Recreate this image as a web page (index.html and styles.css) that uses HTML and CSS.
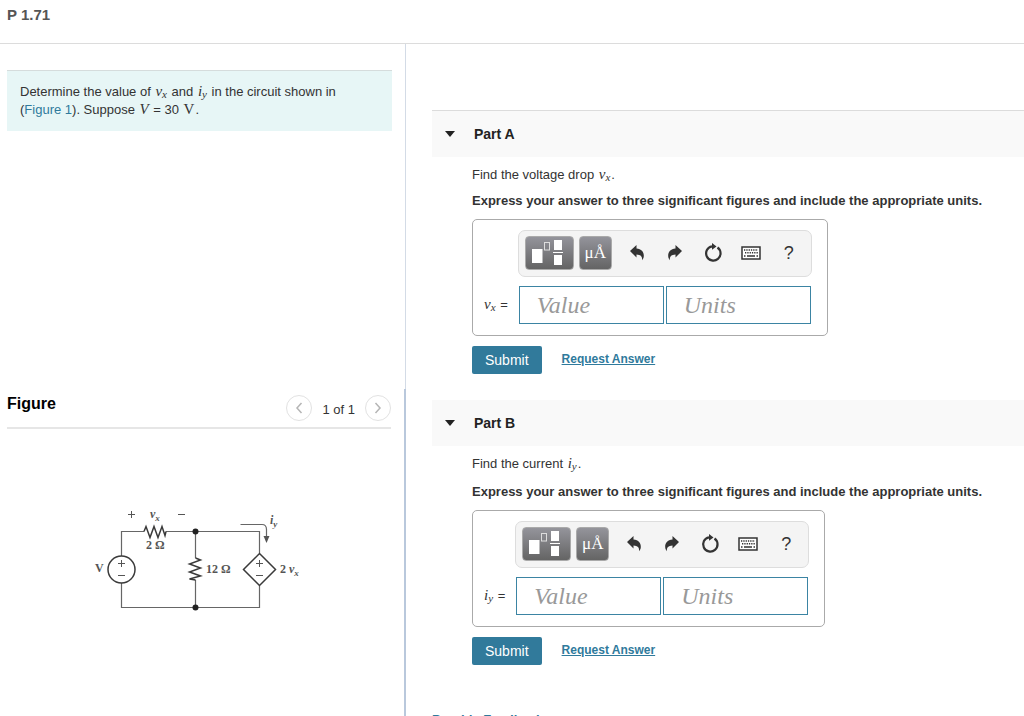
FILE: index.html
```html
<!DOCTYPE html>
<html lang="en">
<head>
    <meta charset="UTF-8">
    <meta name="viewport" content="width=device-width, initial-scale=1.0">
    <title>P 1.71</title>
    <link rel="stylesheet" href="styles.css">
</head>
<body>
    <!-- shared toolbar icons -->
    <svg class="icon-defs" width="0" height="0" aria-hidden="true">
        <symbol id="icon-template" viewBox="0 0 49 33">
            <rect x="7" y="12" width="10.500" height="14" fill="#fff"/>
            <rect x="19.500" y="5.500" width="5" height="7.500" fill="none" stroke="#ddd"/>
            <rect x="29" y="3" width="8" height="10" fill="#fff"/>
            <path d="M28 15.500h10" stroke="#fff"/>
            <rect x="29" y="18" width="8" height="10" fill="#fff"/>
        </symbol>
        <symbol id="icon-undo" viewBox="0 0 16 16">
            <path d="M1 6 7.500 0v3.500C12.500 4 15 7 14.800 11c0 1.700-.7 3.200-1.700 4.200.3-3.600-1.400-5.500-5.600-5.700v3z"/>
        </symbol>
        <symbol id="icon-redo" viewBox="0 0 16 16">
            <path d="M15 6 8.500 0v3.500C3.500 4 1 7 1.200 11c0 1.700.7 3.200 1.700 4.200-.3-3.600 1.400-5.500 5.600-5.700v3z"/>
        </symbol>
        <symbol id="icon-reset" viewBox="0 0 18 20">
            <path d="M13.500 4.500A7.200 7.200 0 1 1 8 3.300" fill="none" stroke="#333" stroke-width="2.200"/>
            <path d="M8 0v6.800L12.500 3.400z"/>
        </symbol>
        <symbol id="icon-keyboard" viewBox="0 0 20 14">
            <rect x="1" y="1" width="18" height="12" fill="#fff" stroke="#333" stroke-width="1.500"/>
            <path d="M3 4h14M4 6.800h13" stroke="#333" stroke-width="1.500" stroke-dasharray="1.300 1"/>
            <path d="M3 10h1.500M6 10h8M15.500 10H17" stroke="#333" stroke-width="1.500"/>
        </symbol>
    </svg>

    <header class="page-header">
        <h1>P 1.71</h1>
    </header>

    <div class="content">
        <div class="left-pane">
            <section class="problem">
                <p class="prompt">
                    Determine the value of <var>v<sub>x</sub></var> and <var>i<sub>y</sub></var> in the circuit shown in
                    (<a href="#figure">Figure 1</a>). Suppose <var>V</var> = 30 <span class="math">V</span>.
                </p>
            </section>
            <section class="figure" id="figure">
                <div class="figure-header">
                    <h2>Figure</h2>
                    <div class="pager">
                        <button type="button" aria-label="Previous figure">
                            <svg width="8" height="12" viewBox="0 0 8 12"><path d="M6.500 1 2 6l4.500 5" /></svg>
                        </button>
                        <span>1 of 1</span>
                        <button type="button" aria-label="Next figure">
                            <svg width="8" height="12" viewBox="0 0 8 12"><path d="M1.500 1 6 6l-4.500 5" /></svg>
                        </button>
                    </div>
                </div>
                <svg class="circuit" width="230" height="120" viewBox="0 0 230 120">
                    <!-- wires -->
                    <g fill="none" stroke="#666" stroke-width="1.200">
                        <path d="M41.500 56V31.500H64M86 31.500h93.500V53M179.500 85.500v22h-138V83"/>
                        <path d="M115.500 31.500V58M115.500 80v27"/>
                        <path d="M160.500 24.500H182q4.500 0 4.500 5V38"/>
                    </g>
                    <path d="M183.500 36h6l-3 7z" fill="#555"/>
                    <!-- components -->
                    <g fill="none" stroke="#3a3a3a" stroke-width="1.500">
                        <path d="M64 31.500l2-5 4 11 4-11 4 11 4-11 3 9 1-4"/>
                        <path d="M115.500 58l5 2-11 4 11 4-11 4 11 4-11 3 6 1"/>
                        <circle cx="41.500" cy="69.500" r="13.500"/>
                        <path d="M179.500 53.500l16 16-16 16-16-16z"/>
                    </g>
                    <g stroke="#555">
                        <path d="M48 14.500h7M51.500 11v7M98 14.500h7"/>
                        <path d="M38 63.500h7M41.500 60v7M38 75.500h7"/>
                        <path d="M176 63.500h7M179.500 60v7M176 75.500h7"/>
                    </g>
                    <circle cx="115.500" cy="31.500" r="3" fill="#222"/>
                    <circle cx="115.500" cy="107.500" r="3" fill="#222"/>
                    <!-- labels -->
                    <g class="circuit-labels">
                        <text x="70" y="18" class="it">v<tspan class="small" dy="3">x</tspan></text>
                        <text x="66" y="49">2 Ω</text>
                        <text x="15" y="72">V</text>
                        <text x="126" y="73">12 Ω</text>
                        <text x="190" y="24" class="it">i<tspan class="small" dy="3">y</tspan></text>
                        <text x="200" y="73">2 <tspan class="it">v</tspan><tspan class="small it" dy="3">x</tspan></text>
                    </g>
                </svg>
            </section>
        </div>

        <main class="right-pane">
            <section class="part part-a">
                <h2 class="part-header"><span class="arrow"></span>Part A</h2>
                <div class="part-body">
                    <p class="question">Find the voltage drop <var>v<sub>x</sub></var>.</p>
                    <p class="instructions">Express your answer to three significant figures and include the appropriate units.</p>
                    <form class="answer">
                        <div class="toolbar">
                            <button type="button" class="tool-dark" aria-label="Templates"><svg width="49" height="33"><use href="#icon-template"/></svg></button>
                            <button type="button" class="tool-dark units-btn">μÅ</button>
                            <div class="tools">
                                <button type="button" aria-label="Undo"><svg width="16" height="16"><use href="#icon-undo"/></svg></button>
                                <button type="button" aria-label="Redo"><svg width="16" height="16"><use href="#icon-redo"/></svg></button>
                                <button type="button" aria-label="Reset"><svg width="18" height="20"><use href="#icon-reset"/></svg></button>
                                <button type="button" aria-label="Keyboard"><svg width="20" height="14"><use href="#icon-keyboard"/></svg></button>
                                <button type="button" class="help">?</button>
                            </div>
                        </div>
                        <label for="value-a"><var>v<sub>x</sub></var> =</label>
                        <div class="fields">
                            <input type="text" id="value-a" placeholder="Value">
                            <input type="text" placeholder="Units" aria-label="Units">
                        </div>
                    </form>
                    <div class="actions">
                        <button type="button" class="submit">Submit</button>
                        <a href="#">Request Answer</a>
                    </div>
                </div>
            </section>

            <section class="part part-b">
                <h2 class="part-header"><span class="arrow"></span>Part B</h2>
                <div class="part-body">
                    <p class="question">Find the current <var>i<sub>y</sub></var>.</p>
                    <p class="instructions">Express your answer to three significant figures and include the appropriate units.</p>
                    <form class="answer">
                        <div class="toolbar">
                            <button type="button" class="tool-dark" aria-label="Templates"><svg width="49" height="33"><use href="#icon-template"/></svg></button>
                            <button type="button" class="tool-dark units-btn">μÅ</button>
                            <div class="tools">
                                <button type="button" aria-label="Undo"><svg width="16" height="16"><use href="#icon-undo"/></svg></button>
                                <button type="button" aria-label="Redo"><svg width="16" height="16"><use href="#icon-redo"/></svg></button>
                                <button type="button" aria-label="Reset"><svg width="18" height="20"><use href="#icon-reset"/></svg></button>
                                <button type="button" aria-label="Keyboard"><svg width="20" height="14"><use href="#icon-keyboard"/></svg></button>
                                <button type="button" class="help">?</button>
                            </div>
                        </div>
                        <label for="value-b"><var>i<sub>y</sub></var> =</label>
                        <div class="fields">
                            <input type="text" id="value-b" placeholder="Value">
                            <input type="text" placeholder="Units" aria-label="Units">
                        </div>
                    </form>
                    <div class="actions">
                        <button type="button" class="submit">Submit</button>
                        <a href="#">Request Answer</a>
                    </div>
                </div>
            </section>

            <a class="feedback" href="#">Provide Feedback</a>
        </main>
    </div>
</body>
</html>
```
FILE: styles.css
```css
* {
    margin: 0;
    padding: 0;
    box-sizing: border-box;
}

body {
    font-family: "Liberation Sans", Arial, sans-serif;
    font-size: 13px;
    line-height: 18px;
    color: #333;
    background-color: #fff;
    height: 100vh;
    display: flex;
    flex-direction: column;
    overflow: hidden;
}

a {
    color: #2f7a9c;
}

button {
    font-family: inherit;
    border: none;
    cursor: pointer;
}

.icon-defs {
    position: absolute;
}

var,
.math {
    font-family: "Liberation Serif", "Times New Roman", serif;
    font-size: 15px;
    line-height: 16px;
    margin: 0 1px;
}

sub {
    font-size: 11px;
    line-height: 0;
    vertical-align: -2px;
}

.page-header {
    flex: none;
    height: 44px;
    padding: 6px 7px;
    border-bottom: 1px solid #dcdcdc;
}

.page-header h1 {
    font-size: 15px;
    line-height: 18px;
    color: #555;
}

.content {
    flex: 1;
    min-height: 0;
    display: grid;
    grid-template-columns: 203fr 309fr;
}

/* left pane */
.left-pane {
    min-height: 0;
    display: flex;
    flex-direction: column;
}

.problem {
    flex: 0 0 345px;
    padding: 26px 13px 0 7px;
    border-right: 1px solid #d3dbe6;
}

.prompt {
    padding: 12px 13px;
    background-color: #e7f6f6;
    border-top: 1px solid #d5dcdc;
}

.prompt a {
    text-decoration: none;
    white-space: nowrap;
}

.figure {
    flex: 1;
    padding: 6px 13px 0 7px;
    border-right: 2px solid #b9c8dc;
}

.figure-header {
    display: flex;
    justify-content: space-between;
    height: 34px;
    border-bottom: 2px solid #e6e6e6;
}

.figure-header h2 {
    font-size: 16px;
    color: #000;
}

.pager {
    display: flex;
    align-items: center;
    gap: 10px;
    height: 26px;
}

.pager span {
    padding-top: 3px;
}

.pager button {
    display: flex;
    align-items: center;
    justify-content: center;
    width: 26px;
    height: 26px;
    border: 1px solid #e2e2e2;
    border-radius: 50%;
    background-color: #fff;
}

.pager path {
    fill: none;
    stroke: #b5b5b5;
    stroke-width: 1.5;
}

.circuit {
    display: block;
    margin: 71px auto 0 73px;
}

.circuit-labels {
    font-family: "Liberation Serif", "Times New Roman", serif;
    font-size: 12px;
    font-weight: bold;
    fill: #555;
}

.circuit-labels .it {
    font-style: italic;
}

.circuit-labels .small {
    font-size: 9px;
}

/* right pane */
.right-pane {
    min-height: 0;
    padding: 66px 0 0 26px;
}

.part {
    margin-bottom: 26px;
}

.part-header {
    display: flex;
    align-items: center;
    gap: 19px;
    height: 46px;
    padding-left: 13px;
    font-size: 14px;
    color: #222;
    background-color: #f9f9f9;
}

.part-a .part-header {
    height: 47px;
    border-top: 1px solid #dcdcdc;
}

.arrow {
    border: 5px solid transparent;
    border-top: 6px solid #222;
    border-bottom: 0;
}

.part-body {
    padding: 9px 0 0 40px;
}

.question {
    margin-bottom: 8px;
}

.part-b .question {
    margin-bottom: 10px;
}

.instructions {
    font-weight: bold;
    margin-bottom: 9px;
}

.answer {
    display: grid;
    grid-template-columns: auto auto;
    align-items: center;
    gap: 9px 10px;
    width: fit-content;
    padding: 10px 15px 11px 10px;
    border: 1px solid #aaa;
    border-radius: 5px;
}

.toolbar {
    grid-column: 2;
    display: flex;
    align-items: flex-start;
    height: 47px;
    padding: 5px 3px 0 6px;
    background-color: #f4f4f4;
    border: 1px solid #ddd;
    border-radius: 7px;
}

.tool-dark {
    width: 49px;
    height: 34px;
    border-radius: 4px;
    border: 1px solid #aaa;
    background: linear-gradient(#94949b, #646464);
    color: #fff;
    display: flex;
    align-items: center;
    justify-content: center;
}

.tool-dark svg {
    flex: none;
}

.units-btn {
    width: 33px;
    margin: 0 6px 0 5px;
    font-family: "Liberation Serif", "Times New Roman", serif;
    font-size: 17px;
}

.tools {
    display: flex;
}

.tools button {
    display: flex;
    align-items: center;
    justify-content: center;
    width: 38px;
    height: 34px;
    background: none;
    color: #333;
}

.tools svg {
    fill: #333;
}

.tools .help {
    font-size: 18px;
}

.fields {
    display: flex;
    gap: 2px;
    padding: 0 1px;
}

.fields input {
    width: 145px;
    height: 38px;
    padding: 0 17px;
    border: 1px solid #3b84a3;
    background-color: #fff;
    font-family: "Liberation Serif", "Times New Roman", serif;
    font-size: 24px;
}

.fields input::placeholder {
    color: #999;
    font-style: italic;
    opacity: 1;
}

.actions {
    display: flex;
    align-items: flex-start;
    gap: 20px;
    margin-top: 10px;
}

.actions a {
    font-size: 12px;
    line-height: 26px;
    font-weight: bold;
}

.submit {
    height: 28px;
    padding: 0 13px;
    border-radius: 2px;
    background-color: #317a9b;
    color: #fff;
    font-size: 14px;
}

.feedback {
    display: block;
    margin-top: 46px;
    font-weight: bold;
    text-decoration: none;
}
```
